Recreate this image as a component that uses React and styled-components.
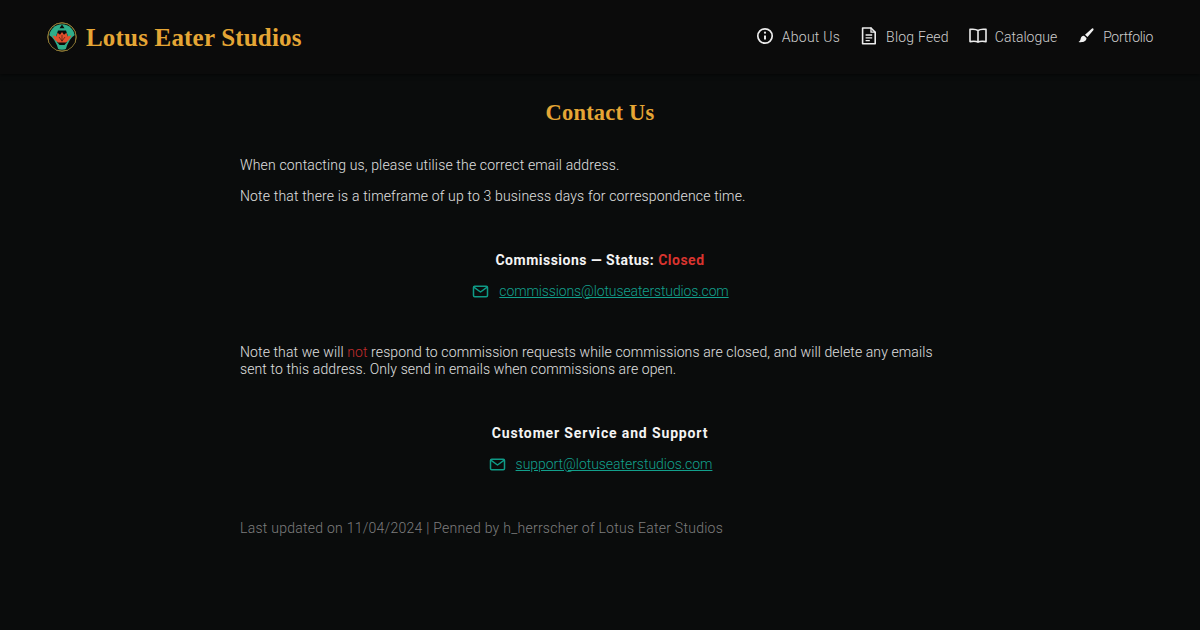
import React from "react";
import styled, { createGlobalStyle } from "styled-components";

const Global = createGlobalStyle`
  html, body { margin: 0; padding: 0; background: #0a0c0c; }
  body { font-family: Roboto, "Liberation Sans", sans-serif; color: #d8d8d8; }
`;
const Page = styled.div`
  width: 1200px; height: 630px; overflow: hidden; background: #0a0c0c;
  display: flex; flex-direction: column;
`;
const Header = styled.header`
  height: 74px; flex: none; background: #0b0b0b; padding: 0 47px 0 47px;
  display: flex; align-items: center; justify-content: space-between;
  box-shadow: 0 1px 4px rgba(0,0,0,.6);
`;
const Brand = styled.a`display: flex; align-items: center; gap: 9px;`;
const Title = styled.span`
  font-family: "Liberation Serif", serif; font-size: 25px; font-weight: 700;
  color: #e5a635; letter-spacing: .19px; line-height: 1;
`;
const Nav = styled.nav`display: flex; align-items: center; gap: 20px;`;
const NavItem = styled.a`
  display: flex; align-items: center; gap: 8px; font-size: 14px; font-weight: 300; color: #cfcfcf;
  letter-spacing: ${p => p.$ls}px;
  svg { flex: none; position: relative; top: -1px; }
`;
const NavIcon = styled.svg.attrs({ width: 18, height: 18, viewBox: "0 0 18 18", "aria-hidden": true })`
  fill: none; stroke: #ececec; stroke-width: 1.6; stroke-linejoin: round; stroke-linecap: round;
`;
const SolidNavIcon = styled(NavIcon)`stroke: none; fill: #f2f2f2;`;
const MailIcon = styled.svg.attrs({ width: 17, height: 17, viewBox: "0 0 17 17", "aria-hidden": true })`
  flex: none; fill: none; stroke: #0f9a86; stroke-width: 1.5; stroke-linejoin: round; stroke-linecap: round;
  position: relative; left: -1px;
`;
const Main = styled.main`width: 720px; margin: 0 auto; padding-top: 26px; box-sizing: border-box; font-size: 14px;`;
const Heading = styled.h1`
  margin: 0 0 31px; text-align: center; font-family: "Liberation Serif", serif; font-size: 22.5px; font-weight: 700;
  color: #e5a635; line-height: 26px; letter-spacing: .2px;
`;
const Para = styled.p`margin: ${p => p.$before || 0}px 0 ${p => p.$after || 14}px; line-height: 17px; color: #e0e0e0; letter-spacing: ${p => p.$ls ?? 0.16}px; font-weight: 300;`;
const Center = styled.div`text-align: center; padding-top: 1px;`;
const Strong = styled.div`font-weight: 700; color: #f4f4f4; line-height: 17px; letter-spacing: ${p => p.$ls}px;`;
const Red = styled.span`color: ${p => p.$strong ? "#d9342f" : "#c22c2c"};`;
const MailRow = styled.div`
  display: flex; align-items: center; justify-content: center; gap: 9px; margin-top: 14px; padding-left: 2px;
`;
const Link = styled.a`color: #12a08c; text-decoration: underline; line-height: 17px; letter-spacing: ${p => p.$ls}px; font-weight: 300;`;
const Footer = styled.p`margin: 47px 0 0; line-height: 17px; color: #7e7e7e; letter-spacing: .26px; font-weight: 300;`;

const Logo = () => (
  <svg width="30" height="30" viewBox="0 0 30 30" aria-hidden="true">
    <circle cx="15" cy="15" r="14.2" fill="#0a0a0a" stroke="#8f7a36" strokeWidth=".9" />
    <circle cx="15" cy="15" r="12.8" fill="#2fae8a" />
    <path d="M2 13 Q8 16 11.5 28 H2Z" fill="#0a0a0a" />
    <path d="M28 13 Q22 16 18.5 28 H28Z" fill="#0a0a0a" />
    <circle cx="15" cy="15" r="14.2" fill="none" stroke="#8f7a36" strokeWidth=".9" />
    <path d="M9.5 13 L11 8.5 H19 L20.5 13 L20 20 L17.5 23 H12.5 L10 20Z" fill="#0a0a0a" />
    <path d="M15 2.5 L17.5 6.2 H12.5Z" fill="#0a0a0a" />
    <path d="M5.5 13.5 L9.5 14.5 L10.5 10.8 L13 12.8 L15 10 L17 12.8 L19.5 10.8 L20.5 14.5 L24.5 13.5 L22 18 L19 20.5 H11 L8 18Z" fill="#e2502c" />
    <path d="M12 15 L15 19 L18 15 M15 13 V19.5" stroke="#0a0a0a" strokeWidth=".5" fill="none" />
  </svg>
);

const InfoIcon = () => (
  <NavIcon>
    <circle cx="9" cy="9" r="7.2" strokeWidth="1.7" />
    <path d="M9 8.4 V12.6" strokeWidth="2" strokeLinecap="butt" />
    <circle cx="9" cy="5.7" r="1.1" fill="#ececec" stroke="none" />
  </NavIcon>
);
const FileIcon = () => (
  <NavIcon>
    <path d="M2.6 1 H11 L15.2 5.2 V16.8 H2.6Z" />
    <path d="M11 1 V5.2 H15.2" strokeWidth="1.3" />
    <path d="M5.6 8 H12.2 M5.6 10.8 H12.2 M5.6 13.6 H9.8" strokeWidth="1.3" strokeLinecap="butt" />
  </NavIcon>
);
const BookIcon = () => (
  <NavIcon>
    <path d="M9 3.6 C7.5 2.4 4 2 1 2.4 V14.6 C4 14.2 7.5 14.2 9 15.2 C10.5 14.2 14 14.2 17 14.6 V2.4 C14 2 10.5 2.4 9 3.6Z M9 3.6 V15.2" />
  </NavIcon>
);
const BrushIcon = () => (
  <SolidNavIcon>
    <path d="M16.2 1.6 Q17 2.4 16.3 3.3 L10.5 10 L8 7.7 L15 1.6 Q15.7 1.1 16.2 1.6Z" />
    <path d="M7 8.8 L9.5 11 C9.5 14 6.5 15.8 1.5 15 C3 14 3.5 13 3.7 11.5 C4 9.8 5.5 8.6 7 8.8Z" />
  </SolidNavIcon>
);
const EnvelopeIcon = () => (
  <MailIcon>
    <rect x="1.5" y="3.2" width="14" height="10.6" rx="1.2" />
    <path d="M1.8 4.2 L8.5 9 L15.2 4.2" />
  </MailIcon>
);

export default function App() {
  return (
    <Page>
      <Global />
      <Header>
        <Brand>
          <Logo />
          <Title>Lotus Eater Studios</Title>
        </Brand>
        <Nav>
          <NavItem $ls={0.25}><InfoIcon />About Us</NavItem>
          <NavItem $ls={0.22}><FileIcon />Blog Feed</NavItem>
          <NavItem $ls={0}><BookIcon />Catalogue</NavItem>
          <NavItem $ls={-0.3}><BrushIcon />Portfolio</NavItem>
        </Nav>
      </Header>
      <Main>
        <Heading>Contact Us</Heading>
        <Para>When contacting us, please utilise the correct email address.</Para>
        <Para $after={46}>Note that there is a timeframe of up to 3 business days for correspondence time.</Para>
        <Center>
          <Strong $ls={0.5}>Commissions — Status: <Red $strong>Closed</Red></Strong>
          <MailRow><EnvelopeIcon /><Link $ls={-0.12}>commissions@lotuseaterstudios.com</Link></MailRow>
        </Center>
        <Para $ls={0.11} $before={44} $after={46}>
          Note that we will <Red>not</Red> respond to commission requests while commissions are closed, and will delete any emails sent to this address. Only send in emails when commissions are open.
        </Para>
        <Center>
          <Strong $ls={0.86}>Customer Service and Support</Strong>
          <MailRow><EnvelopeIcon /><Link $ls={-0.04}>support@lotuseaterstudios.com</Link></MailRow>
        </Center>
        <Footer>Last updated on 11/04/2024 | Penned by h_herrscher of Lotus Eater Studios</Footer>
      </Main>
    </Page>
  );
}
